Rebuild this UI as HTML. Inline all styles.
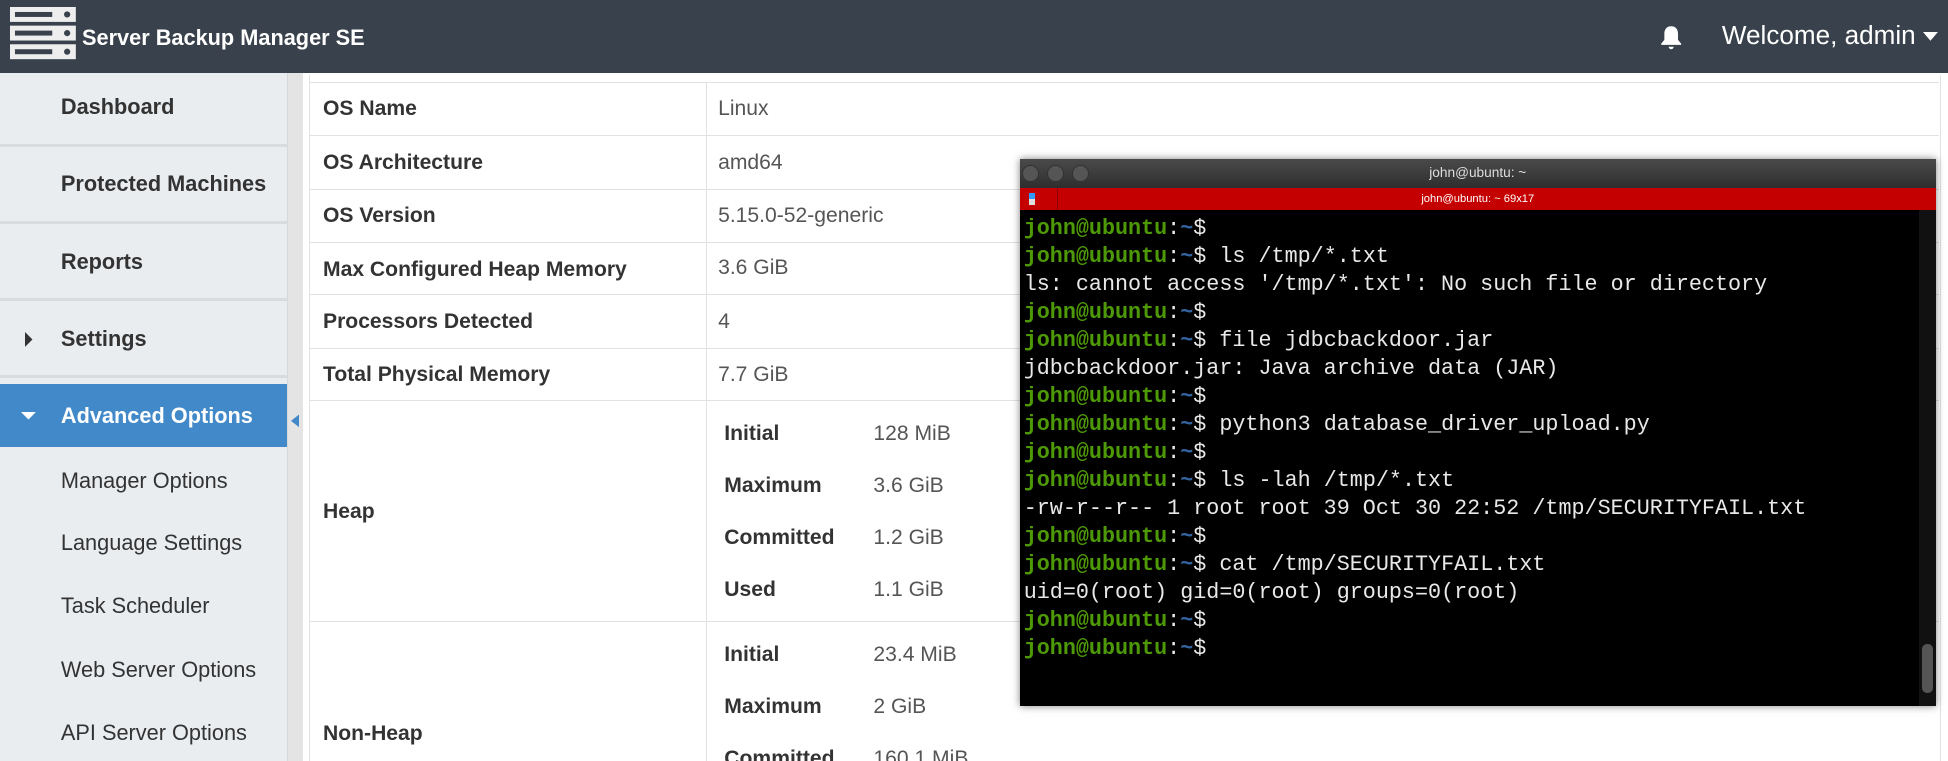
<!DOCTYPE html>
<html><head><style>
html,body{margin:0;padding:0;width:1948px;height:761px;overflow:hidden;background:#fff}
#w{zoom:1.24235;width:1568px;height:613px;position:relative;font-family:"Liberation Sans",sans-serif;overflow:hidden}
.hdr{position:absolute;left:0;top:0;width:1568px;height:59px;background:#39424c}
.ttl{position:absolute;left:66px;top:20px;color:#fff;font-weight:bold;font-size:17.5px}
.wel{position:absolute;left:1386px;top:16px;color:#fff;font-size:21px}
.side{position:absolute;left:0;top:59px;width:231px;height:554px;background:#eaedf0}
.gut{position:absolute;left:231px;top:59px;width:12px;height:554px;background:#e4e4e4;border-left:1px solid #d8d8d8}
.it{position:absolute;left:49px;font-size:17.5px;color:#333;font-weight:bold;transform:translateY(-50%)}
.sub{position:absolute;left:49px;font-size:17.5px;color:#333;transform:translateY(-50%)}
.sep{position:absolute;left:0;width:231px;height:2px;background:#d9dcdf}
.act{position:absolute;left:0;top:309px;width:231px;height:51px;background:#4189c9}
.tb{position:absolute;left:249px;width:1312px;border-top:1px solid #e2e2e2}
.lb{position:absolute;left:260px;font-size:17px;font-weight:bold;color:#333;transform:translateY(-50%)}
.vl{position:absolute;left:578px;font-size:17px;color:#555;transform:translateY(-50%)}
.nl{position:absolute;left:583px;font-size:17px;font-weight:bold;color:#333;transform:translateY(-50%)}
.nv{position:absolute;left:703px;font-size:17px;color:#555;transform:translateY(-50%)}
.term{position:absolute;left:821px;top:128px;width:737px;height:440px;background:#000;box-shadow:0 0 6px rgba(0,0,0,.5)}
.tt{height:23px;background:linear-gradient(#4a4a4a,#2e2e2e);color:#ddd;font-size:11px;text-align:center;line-height:23px;position:relative}
.rb{height:18px;background:#c50000;color:#fff;font-size:9px;text-align:center;line-height:18px;position:relative}
.body{position:absolute;left:3px;top:45px;font-family:"Liberation Mono",monospace;font-size:17.5px;line-height:22.55px;color:#e8e8e8;white-space:pre}
.g{color:#4e9a06;font-weight:bold}.b{color:#3465a4;font-weight:bold}
.dot{position:absolute;top:5px;width:12px;height:12px;border-radius:50%;background:#555;border:1px solid #333}
</style></head><body><div id="w">
<div class="hdr">
<svg style="position:absolute;left:8px;top:6px" width="53" height="42" viewBox="0 0 53 42"><g fill="#eee"><rect x="0" y="0" width="53" height="12"/><rect x="0" y="15" width="53" height="12"/><rect x="0" y="30" width="53" height="12"/></g><g fill="#39424c"><rect x="4" y="4" width="30" height="4"/><rect x="4" y="19" width="30" height="4"/><rect x="4" y="34" width="30" height="4"/><circle cx="46" cy="6" r="2.5"/><circle cx="46" cy="21" r="2.5"/><circle cx="46" cy="36" r="2.5"/></g></svg>
<div class="ttl">Server Backup Manager SE</div>
<svg style="position:absolute;left:1336px;top:20px" width="18" height="20" viewBox="0 0 18 20"><path d="M9 1C5 1 3.5 4 3.5 7v5L1 15v1h16v-1l-2.5-3V7C14.5 4 13 1 9 1zM7 17.5a2 2 0 0 0 4 0z" fill="#fff"/></svg>
<div class="wel">Welcome, admin</div>
<svg style="position:absolute;left:1548px;top:26px" width="12" height="8"><path d="M0 0h12L6 7z" fill="#fff"/></svg>
</div>
<div class="side"></div><div class="gut"></div>
<div class="sep" style="top:116px"></div><div class="sep" style="top:178px"></div><div class="sep" style="top:240px"></div><div class="sep" style="top:302px"></div>
<div class="act"></div>
<div class="it" style="top:86px">Dashboard</div>
<div class="it" style="top:148px">Protected Machines</div>
<div class="it" style="top:211px">Reports</div>
<svg style="position:absolute;left:20px;top:267px" width="7" height="12"><path d="M0 0l6 6-6 6z" fill="#333"/></svg>
<div class="it" style="top:273px">Settings</div>
<svg style="position:absolute;left:17px;top:332px" width="12" height="7"><path d="M0 0h12L6 6z" fill="#fff"/></svg>
<div class="it" style="top:335px;color:#fff">Advanced Options</div>
<svg style="position:absolute;left:234px;top:333px" width="7" height="11"><path d="M7 0v11L0 5.5z" fill="#4189c9"/></svg>
<div class="sub" style="top:387px">Manager Options</div>
<div class="sub" style="top:437px">Language Settings</div>
<div class="sub" style="top:488px">Task Scheduler</div>
<div class="sub" style="top:539px">Web Server Options</div>
<div class="sub" style="top:590px">API Server Options</div>
<div style="position:absolute;left:249px;top:60px;width:1312px;height:553px;border-left:1px solid #e2e2e2;border-right:1px solid #e2e2e2"></div>
<div style="position:absolute;left:568px;top:66px;width:1px;height:547px;background:#e2e2e2"></div>
<div class="tb" style="top:66px"></div><div class="tb" style="top:109px"></div><div class="tb" style="top:152px"></div><div class="tb" style="top:195px"></div><div class="tb" style="top:237px"></div><div class="tb" style="top:280px"></div><div class="tb" style="top:322px"></div><div class="tb" style="top:500px"></div>
<div class="lb" style="top:88px">OS Name</div><div class="vl" style="top:88px">Linux</div>
<div class="lb" style="top:131px">OS Architecture</div><div class="vl" style="top:131px">amd64</div>
<div class="lb" style="top:174px">OS Version</div><div class="vl" style="top:174px">5.15.0-52-generic</div>
<div class="lb" style="top:217px">Max Configured Heap Memory</div><div class="vl" style="top:216px">3.6 GiB</div>
<div class="lb" style="top:259px">Processors Detected</div><div class="vl" style="top:259px">4</div>
<div class="lb" style="top:302px">Total Physical Memory</div><div class="vl" style="top:302px">7.7 GiB</div>
<div class="lb" style="top:412px">Heap</div>
<div class="nl" style="top:349px">Initial</div><div class="nv" style="top:349px">128 MiB</div>
<div class="nl" style="top:391px">Maximum</div><div class="nv" style="top:391px">3.6 GiB</div>
<div class="nl" style="top:433px">Committed</div><div class="nv" style="top:433px">1.2 GiB</div>
<div class="nl" style="top:475px">Used</div><div class="nv" style="top:475px">1.1 GiB</div>
<div class="lb" style="top:591px">Non-Heap</div>
<div class="nl" style="top:527px">Initial</div><div class="nv" style="top:527px">23.4 MiB</div>
<div class="nl" style="top:569px">Maximum</div><div class="nv" style="top:569px">2 GiB</div>
<div class="nl" style="top:611px">Committed</div><div class="nv" style="top:611px">160.1 MiB</div>
<div class="term">
<div class="tt">john@ubuntu: ~<div class="dot" style="left:2px"></div><div class="dot" style="left:22px"></div><div class="dot" style="left:42px"></div></div>
<div class="rb">john@ubuntu: ~ 69x17<div style="position:absolute;left:0;top:0;width:30px;height:18px;border-right:1px solid #800"></div><div style="position:absolute;left:7px;top:4px;width:5px;height:5px;background:#39f"></div><div style="position:absolute;left:7px;top:9px;width:5px;height:5px;background:#ddd"></div></div>
<div class="body"><span class="g">john@ubuntu</span>:<span class="b">~</span>$
<span class="g">john@ubuntu</span>:<span class="b">~</span>$ ls /tmp/*.txt
ls: cannot access '/tmp/*.txt': No such file or directory
<span class="g">john@ubuntu</span>:<span class="b">~</span>$
<span class="g">john@ubuntu</span>:<span class="b">~</span>$ file jdbcbackdoor.jar
jdbcbackdoor.jar: Java archive data (JAR)
<span class="g">john@ubuntu</span>:<span class="b">~</span>$
<span class="g">john@ubuntu</span>:<span class="b">~</span>$ python3 database_driver_upload.py
<span class="g">john@ubuntu</span>:<span class="b">~</span>$
<span class="g">john@ubuntu</span>:<span class="b">~</span>$ ls -lah /tmp/*.txt
-rw-r--r-- 1 root root 39 Oct 30 22:52 /tmp/SECURITYFAIL.txt
<span class="g">john@ubuntu</span>:<span class="b">~</span>$
<span class="g">john@ubuntu</span>:<span class="b">~</span>$ cat /tmp/SECURITYFAIL.txt
uid=0(root) gid=0(root) groups=0(root)
<span class="g">john@ubuntu</span>:<span class="b">~</span>$
<span class="g">john@ubuntu</span>:<span class="b">~</span>$</div>
<div style="position:absolute;right:0;top:41px;width:13px;height:399px;background:#111"></div>
<div style="position:absolute;right:2px;top:390px;width:9px;height:40px;background:#555;border-radius:4px"></div>
</div>
</div></body></html>
